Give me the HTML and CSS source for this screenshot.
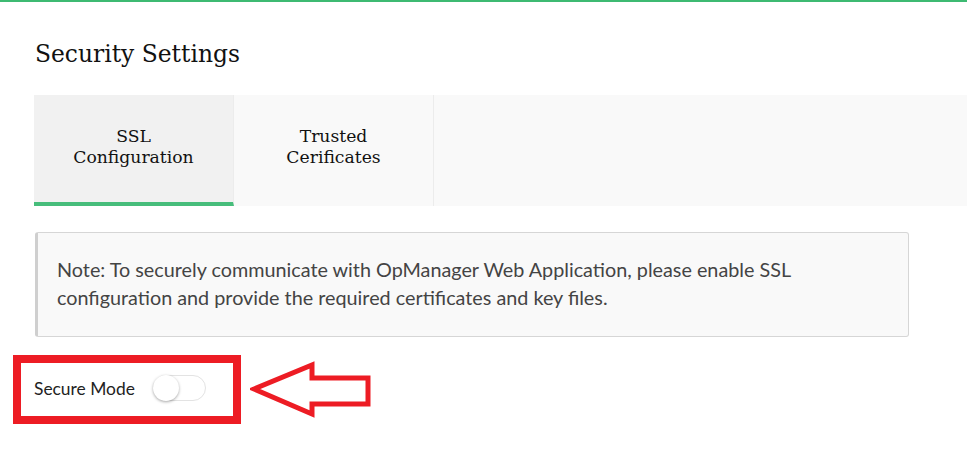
FILE: index.html
```html
<!DOCTYPE html>
<html>
<head>
<meta charset="utf-8">
<link rel="stylesheet" href="styles.css">
</head>
<body>
<div class="topline"></div>
<div class="page">
  <h1 class="title">Security Settings</h1>
  <div class="tabs">
    <div class="tab active">SSL<br>Configuration</div>
    <div class="tab">Trusted<br>Cerificates</div>
    <div class="tab-rest"></div>
  </div>
  <div class="note">Note: To securely communicate with OpManager Web Application, please enable SSL configuration and provide the required certificates and key files.</div>
  <div class="mode-row">
    <span class="mode-label">Secure Mode</span>
    <span class="toggle"><span class="knob"></span></span>
  </div>
</div>
<div class="annot-box"></div>
<svg class="annot-arrow" width="130" height="60" viewBox="0 0 130 60">
  <polygon points="4,29 62,5 62,18 118,18 118,44 62,44 62,54" fill="#fff" stroke="#ed1c24" stroke-width="5" stroke-linejoin="miter"/>
</svg>
</body>
</html>
```
FILE: styles.css
```css
* { box-sizing: border-box; }
body {
  margin: 0;
  background: #fff;
  width: 967px;
  height: 464px;
  overflow: hidden;
  position: relative;
}
.topline {
  height: 2px;
  background: #3dba72;
}
.page {
  padding-left: 34px;
}
.title {
  margin: 0;
  padding-top: 37px;
  height: 93px;
  font-family: "DejaVu Serif", serif;
  font-weight: normal;
  font-size: 23.4px;
  line-height: 30px;
  color: #111;
  padding-left: 1px;
}
.tabs {
  display: flex;
  height: 111px;
  background: #f9f9f9;
}
.tab {
  width: 200px;
  display: flex;
  align-items: center;
  justify-content: center;
  text-align: center;
  font-family: "DejaVu Serif", serif;
  font-size: 17.2px;
  line-height: 21px;
  color: #111;
  border-right: 1px solid #ececec;
  padding-bottom: 8px;
}
.tab.active {
  background: #f1f1f1;
  border-bottom: 4px solid #47bd7b;
  padding-bottom: 4px;
  width: 200px;
}
.tab-rest { flex: 1; }
.note {
  margin-top: 26px;
  margin-left: 1px;
  width: 874px;
  height: 105px;
  background: #f9f9f9;
  border: 1px solid #d6d6d6;
  border-left: 3px solid #cfcfcf;
  border-radius: 3px;
  padding: 22px 20px 0 19px;
  font-family: Lato, sans-serif;
  font-size: 19.8px;
  line-height: 28px;
  color: #444;
}
.mode-row {
  display: flex;
  align-items: center;
  margin-top: 38px;
  height: 26px;
}
.mode-label {
  font-family: Lato, sans-serif;
  font-size: 17.4px;
  color: #222;
  width: 119px;
}
.toggle {
  position: relative;
  width: 53px;
  height: 26px;
  border: 1px solid #e3e3e3;
  border-radius: 13px;
  background: #fff;
}
.knob {
  position: absolute;
  left: -1px;
  top: -1px;
  width: 26px;
  height: 26px;
  border-radius: 50%;
  background: #fff;
  box-shadow: 0 1px 3px rgba(0,0,0,0.35);
}
.annot-box {
  position: absolute;
  left: 13px;
  top: 355px;
  width: 228px;
  height: 69px;
  border: 8px solid #ed1c24;
}
.annot-arrow {
  position: absolute;
  left: 250px;
  top: 360px;
}
```
